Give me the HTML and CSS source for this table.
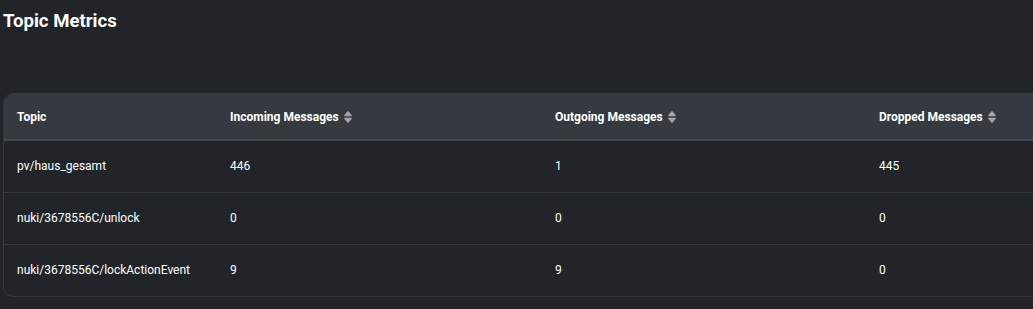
FILE: index.html
```html
<!DOCTYPE html>
<html lang="en">
<head>
<meta charset="utf-8">
<title>Topic Metrics</title>
<link rel="stylesheet" href="styles.css">
</head>
<body>
<main class="page">
  <h1 class="title">Topic Metrics</h1>
  <div class="table-wrap">
    <table class="metrics">
      <colgroup>
        <col class="c-topic"><col class="c-num"><col class="c-num2"><col class="c-num-last">
      </colgroup>
      <thead>
        <tr>
          <th>Topic</th>
          <th><span class="th-label">Incoming Messages<svg class="sort" viewBox="0 0 8 12" aria-hidden="true"><path d="M3.3 0.6a0.9 0.9 0 0 1 1.4 0L7.7 4.2c0.4 0.5 0.1 1.1-0.6 1.1H0.9c-0.7 0-1-0.6-0.6-1.1Z"/><path d="M0.9 6.7h6.2c0.7 0 1 0.6 0.6 1.1L4.7 11.4a0.9 0.9 0 0 1-1.4 0L0.3 7.8c-0.4-0.5-0.1-1.1 0.6-1.1Z"/></svg></span></th>
          <th><span class="th-label">Outgoing Messages<svg class="sort" viewBox="0 0 8 12" aria-hidden="true"><path d="M3.3 0.6a0.9 0.9 0 0 1 1.4 0L7.7 4.2c0.4 0.5 0.1 1.1-0.6 1.1H0.9c-0.7 0-1-0.6-0.6-1.1Z"/><path d="M0.9 6.7h6.2c0.7 0 1 0.6 0.6 1.1L4.7 11.4a0.9 0.9 0 0 1-1.4 0L0.3 7.8c-0.4-0.5-0.1-1.1 0.6-1.1Z"/></svg></span></th>
          <th><span class="th-label">Dropped Messages<svg class="sort" viewBox="0 0 8 12" aria-hidden="true"><path d="M3.3 0.6a0.9 0.9 0 0 1 1.4 0L7.7 4.2c0.4 0.5 0.1 1.1-0.6 1.1H0.9c-0.7 0-1-0.6-0.6-1.1Z"/><path d="M0.9 6.7h6.2c0.7 0 1 0.6 0.6 1.1L4.7 11.4a0.9 0.9 0 0 1-1.4 0L0.3 7.8c-0.4-0.5-0.1-1.1 0.6-1.1Z"/></svg></span></th>
        </tr>
      </thead>
      <tbody>
        <tr><td>pv/haus_gesamt</td><td>446</td><td>1</td><td>445</td></tr>
        <tr><td>nuki/3678556C/unlock</td><td>0</td><td>0</td><td>0</td></tr>
        <tr><td>nuki/3678556C/lockActionEvent</td><td>9</td><td>9</td><td>0</td></tr>
      </tbody>
    </table>
  </div>
</main>
</body>
</html>
```
FILE: styles.css
```css
html, body {
  margin: 0;
  padding: 0;
  background: #212529;
  overflow: hidden;
}

body {
  font-family: Roboto, "Liberation Sans", Arial, sans-serif;
  color: #ffffff;
}

.page {
  padding: 0 0 0 3px;
  overflow: hidden;
}

.title {
  margin: 0;
  padding-top: 9px;
  font-size: 18.6px;
  line-height: 24px;
  font-weight: 700;
  color: #ffffff;
  height: 93px;
  box-sizing: border-box;
}

.table-wrap {
  width: 1200px;
  border: 1px solid #33383d;
  border-radius: 10px;
  overflow: hidden;
  background: #212529;
}

.metrics {
  width: 100%;
  border-collapse: collapse;
  table-layout: fixed;
  font-size: 12px;
}

.c-topic { width: 213px; }
.c-num { width: 325px; }
.c-num2 { width: 324px; }

.metrics th {
  background: #343a40;
  text-align: left;
  font-weight: 700;
  line-height: 18px;
  padding: 14px 13px 13px;
  border-bottom: 2px solid #43484d;
  white-space: nowrap;
}

.th-label {
  display: inline-flex;
  align-items: center;
  gap: 5px;
}

.sort {
  width: 8px;
  height: 12px;
  fill: #a0a4a8;
}

.metrics td {
  padding: 16px 13px 16px;
  line-height: 19px;
  border-bottom: 1px solid #33383d;
  white-space: nowrap;
}

.metrics tbody tr:last-child td {
  border-bottom: none;
}
```
